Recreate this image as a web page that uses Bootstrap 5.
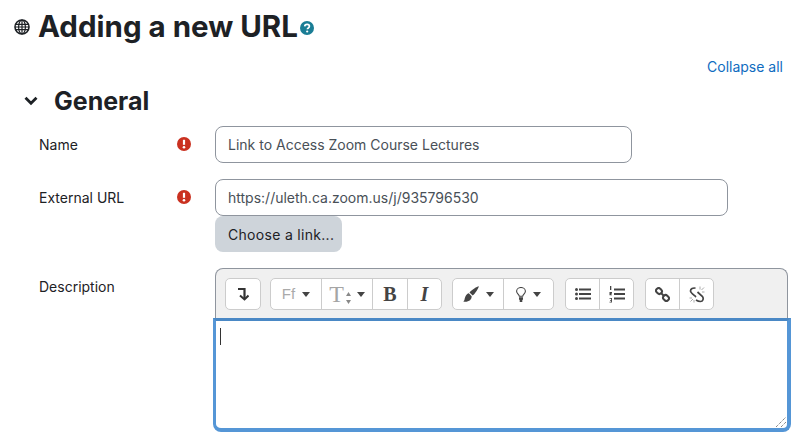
<!DOCTYPE html>
<html lang="en"><head><meta charset="utf-8"><title>Adding a new URL</title>
<link href="https://cdn.jsdelivr.net/npm/bootstrap@5.3.0/dist/css/bootstrap.min.css" rel="stylesheet">
<style>
html,body{height:442px;overflow:hidden}
body{font-family:Inter,"Liberation Sans",sans-serif;font-size:14px;color:#1d2125;background:#fff}
.pg{padding:9px 16px 0 14px}
.ttl{height:36px;gap:8px}
.ttl h1{font-size:29.5px;font-weight:700;margin:0;line-height:36px;padding-bottom:3px}
.ttl .hlp{margin:1px 0 0 -6px}
.coll{margin-top:12px;height:20px;line-height:20px;color:#0f6cbf;padding-right:5px}
.coll a{color:inherit;text-decoration:none}
.sec{margin:9px 0 0 10px;height:30px;gap:16px}
.sec h2{font-size:25px;font-weight:700;margin:0;line-height:30px}
.frow{display:flex;margin-bottom:16px}
.lbl{width:138px;margin-left:25px;line-height:37px;flex:none}
.req{width:38px;flex:none;padding-top:11px;line-height:0}
.fld{flex:1;min-width:0}
.inp{height:37px;border:1px solid #8f959e;border-radius:8px;color:#495057;font-size:14px;padding:6px 12px;box-shadow:none}
.w1{width:417px}.w2{width:513px}
.pick{display:block;width:127px;height:36px;padding:0 0 0 13px;text-align:left;background:#ced4da;border:0;border-radius:8px;color:#1d2125;font-size:14px;letter-spacing:.3px}
.dlbl{width:138px;margin-left:25px;padding-top:8px;flex:none;line-height:22px}
.spc{width:38px;flex:none}
.edt{width:573px}
.tbar{height:51px;background:#f0f0f0;border:1px solid #8f959e;border-bottom:0;border-radius:8px 8px 0 0;padding:9px 0 0 9px;display:flex}
.grp{display:flex;height:32px;background:#fff;border:1px solid #ccc;border-radius:5px}
.g9{margin-left:9px}.g10{margin-left:10px}.g11{margin-left:11px}
.tb{height:30px;display:flex;align-items:center;justify-content:center;gap:7px;border-left:1px solid #ccc;color:#444}
.tb:first-child{border-left:0}
.tight{gap:2px}
.w33{width:33px}.w34{width:34px}.w35{width:35px}.w50{width:50px}.w51{width:51px}
.car{width:0;height:0;border:4.500px solid transparent;border-top:5px solid #444;border-bottom:0}
.ff{font-family:"Liberation Sans",sans-serif;font-size:15px;color:#aaa}
.tt{font-family:"Liberation Serif",serif;font-size:24px;color:#a5a5a5;line-height:1}
.bb{font-family:"Liberation Serif",serif;font-weight:700;font-size:20px;color:#444;line-height:1}
.ii{font-family:"Liberation Serif",serif;font-weight:700;font-style:italic;font-size:20px;color:#444;line-height:1}
.wrapz{position:relative;margin:-1px -3px 0 -2px}
.area{height:114px;border-style:solid;border-width:3px 4px 4px 3px;border-color:#4a88c5 #5596d6 #5596d6;border-radius:0 0 8px 8px;padding:7px 4px;background:#fff}
.cur{display:block;width:1px;height:17px;background:#333}
.grip{position:absolute;right:5px;bottom:5px}
</style></head><body>
<div class="pg">
 <div class="ttl d-flex align-items-center">
  <svg width="16" height="16" viewBox="0 0 16 16" fill="none" stroke="#1d2125" stroke-width="1.200"><circle cx="8" cy="8" r="7" fill="#fff" stroke-width="1.600"/><ellipse cx="8" cy="8" rx="3.400" ry="7"/><path d="M1.500 5.300h13M1 8h14M1.500 10.700h13M8 1v14"/></svg>
  <h1>Adding a new URL</h1>
  <svg class="hlp" width="14" height="14" viewBox="0 0 14 14"><circle cx="7" cy="7" r="7" fill="#1a7d95"/><path d="M4.700 5.400C4.800 4 5.800 3.300 7.100 3.300c1.300 0 2.300.8 2.300 2 0 1.700-2 1.600-2 3" fill="none" stroke="#fff" stroke-width="1.700"/><circle cx="7.200" cy="10.500" r="1.100" fill="#fff"/></svg>
 </div>
 <div class="coll text-end"><a href="#">Collapse all</a></div>
 <div class="sec d-flex align-items-center">
  <svg width="14" height="10" viewBox="0 0 14 10" fill="none" stroke="#1d2125" stroke-width="2.800"><path d="M1.500 1.800 7 7.300l5.500-5.500"/></svg>
  <h2>General</h2>
 </div>
 <div class="frow" style="margin-top:10px">
  <div class="lbl">Name</div>
  <div class="req"><svg width="14" height="14" viewBox="0 0 14 14"><circle cx="7" cy="7" r="7" fill="#ca3120"/><path d="M7 2.800v5" stroke="#fff" stroke-width="2.200"/><circle cx="7" cy="10.300" r="1.300" fill="#fff"/></svg></div>
  <div class="fld"><input class="form-control inp w1" value="Link to Access Zoom Course Lectures"></div>
 </div>
 <div class="frow">
  <div class="lbl">External URL</div>
  <div class="req"><svg width="14" height="14" viewBox="0 0 14 14"><circle cx="7" cy="7" r="7" fill="#ca3120"/><path d="M7 2.800v5" stroke="#fff" stroke-width="2.200"/><circle cx="7" cy="10.300" r="1.300" fill="#fff"/></svg></div>
  <div class="fld"><input class="form-control inp w2" value="https://uleth.ca.zoom.us/j/935796530"><button class="btn pick">Choose a link...</button></div>
 </div>
 <div class="frow mb-0">
  <div class="dlbl">Description</div>
  <div class="spc"></div>
  <div class="edt">
   <div class="tbar">
    <div class="grp"><div class="tb w34"><svg width="11" height="14" viewBox="0 0 11 14" fill="none" stroke="#333" stroke-width="2.200"><path d="M0 2h6.500v9"/><path d="M2 8.500l4.500 4 4-4" stroke-width="2"/></svg></div></div>
    <div class="grp g9">
     <div class="tb w50"><span class="ff">Ff</span><span class="car"></span></div>
     <div class="tb w51 tight"><span class="tt">T</span><svg width="5" height="12" viewBox="0 0 5 12" fill="#888" class="mt-2"><path d="M2.500 0 5 4H0zM2.500 12 0 8h5z"/></svg><span class="car ms-1"></span></div>
     <div class="tb w35"><span class="bb">B</span></div>
     <div class="tb w34"><span class="ii">I</span></div>
    </div>
    <div class="grp g10">
     <div class="tb w50"><svg width="16" height="16" viewBox="0 0 16 16" fill="#444"><path d="M15.700.3c.5.500-3.500 7.700-6 9.200L6.500 6.500C8.500 4 15.200-.2 15.700.3zM5.800 7.300l2.900 2.900c0 3-2.200 5.500-6.700 5.500-1 0-1.800-.2-1.800-.5 1.700-.6 1-2.200 2.200-4.800.8-1.700 2.300-3.100 3.400-3.100z"/></svg><span class="car"></span></div>
     <div class="tb w50"><svg width="10" height="15" viewBox="0 0 10 15" fill="none" stroke="#444" stroke-width="1.100"><path d="M3.300 9.200C3 7.500 .6 6.500.6 4.300a4.400 3.800 0 0 1 8.800 0c0 2.200-2.400 3.200-2.700 4.900z"/><path d="M3 11.500h4M3.700 13.700h2.600" stroke-width="2.400"/></svg><span class="car"></span></div>
    </div>
    <div class="grp g11">
     <div class="tb w33"><svg width="16" height="12" viewBox="0 0 16 12" fill="#444"><circle cx="1.500" cy="1.500" r="1.500"/><circle cx="1.500" cy="6" r="1.500"/><circle cx="1.500" cy="10.500" r="1.500"/><path d="M4 .5h12v2H4zM4 5h12v2H4zM4 9.500h12v2H4z"/></svg></div>
     <div class="tb w34"><svg width="16" height="17" viewBox="0 0 16 17" fill="#444"><path d="M1 0h1.300v4H1zM.5 6h2.500v1.200L1.800 8.500H3v.8H.5zM.5 12H3v4.500H.5v-.8h1.600V15H1v-.7h1.100v-1.500H.5z"/><path d="M5 2.500h11v2H5zM5 7h11v2H5zM5 11.500h11v2H5z"/></svg></div>
    </div>
    <div class="grp g11">
     <div class="tb w33"><svg width="15" height="15" viewBox="0 0 15 15" fill="none" stroke="#444" stroke-width="2"><rect x="1" y="1.500" width="6" height="5" rx="2.300" transform="rotate(45 4 4)"/><rect x="8" y="8.500" width="6" height="5" rx="2.300" transform="rotate(45 11 11)"/><path d="M6 6l3 3"/></svg></div>
     <div class="tb w34"><svg width="16" height="17" viewBox="0 0 16 17" fill="none" stroke="#444" stroke-width="1.700"><path d="M6.500 2.200C4 1.500 1.500 3 1.500 5c0 1.500 1.500 2.500 5.500 6M8.500 6l5 4.500c1.500 2 .5 5-2 5-2 0-3-.5-4.500-1.500"/><path d="M11 .5v3M15 1.500l-2.500 2.500M15.500 6H13M.5 12H3M1.500 15.500 4 13M5 16.500V14" stroke="#aaa" stroke-width="1"/></svg></div>
    </div>
   </div>
   <div class="wrapz">
    <div class="area"><span class="cur"></span></div>
    <svg class="grip" width="10" height="10" viewBox="0 0 10 10" stroke="#555" stroke-width="1" stroke-dasharray="1 1"><path d="M0 10 10 0M5 10l5-5"/></svg>
   </div>
  </div>
 </div>
</div>
</body></html>
